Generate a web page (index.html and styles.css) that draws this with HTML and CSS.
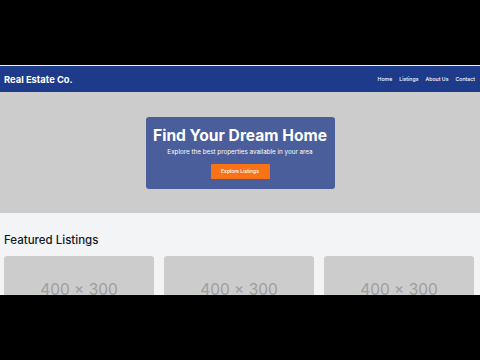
FILE: index.html
```html
<!DOCTYPE html>
<html lang="en">
<head>
    <meta charset="UTF-8">
    <title>Real Estate Co.</title>
    <link rel="stylesheet" href="styles.css">
</head>
<body>
    <div class="frame">
        <header class="topbar">
            <div class="brand">Real Estate Co.</div>
            <nav class="nav">
                <a href="#">Home</a>
                <a href="#">Listings</a>
                <a href="#">About Us</a>
                <a href="#">Contact</a>
            </nav>
        </header>

        <section class="hero">
            <div class="hero-bg">1920 x 1080</div>
            <div class="hero-box">
                <h1>Find Your Dream Home</h1>
                <p>Explore the best properties available in your area</p>
                <button class="cta">Explore Listings</button>
            </div>
        </section>

        <section class="featured">
            <h2>Featured Listings</h2>
            <div class="cards">
                <div class="card"><div class="thumb">400 x 300</div></div>
                <div class="card"><div class="thumb">400 x 300</div></div>
                <div class="card"><div class="thumb">400 x 300</div></div>
            </div>
        </section>
    </div>
</body>
</html>
```

FILE: styles.css
```css
html, body {
    margin: 0;
    padding: 0;
    background: #000;
    font-family: Inter, 'Liberation Sans', sans-serif;
}

.frame {
    margin-top: 65px;
    height: 229px;
    overflow: hidden;
    border-top: 1px solid #f0f0f0;
    background: #f3f4f6;
}

.topbar {
    height: 26px;
    background: #1e3a8a;
    display: flex;
    align-items: center;
    justify-content: space-between;
    padding: 0 5px 0 4px;
    color: #fff;
}

.brand {
    font-size: 9.4px;
    font-weight: 700;
}

.nav {
    display: flex;
    gap: 7px;
}

.nav a {
    color: #fff;
    text-decoration: none;
    font-size: 5.2px;
    font-weight: 500;
}

.hero {
    height: 121px;
    background: #cccccc;
    display: grid;
    place-items: center;
}

.hero-bg,
.hero-box {
    grid-area: 1 / 1;
}

.hero-bg {
    font-size: 14px;
    color: #bdbdbd;
    margin-top: 6px;
}

.hero-box {
    width: 189px;
    height: 72px;
    box-sizing: border-box;
    background: rgba(30, 58, 138, 0.75);
    border-radius: 3px;
    display: flex;
    flex-direction: column;
    align-items: center;
    padding-top: 9px;
    color: #fff;
    white-space: nowrap;
}

.hero-box h1 {
    margin: 0;
    font-size: 15.6px;
    font-weight: 700;
    line-height: 20px;
}

.hero-box p {
    margin: 1px 0 7px;
    font-size: 6.3px;
    line-height: 10px;
}

.cta {
    width: 59px;
    height: 15px;
    border: none;
    border-radius: 1px;
    background: #f97316;
    color: #fff;
    font-family: inherit;
    font-size: 5px;
    font-weight: 500;
    padding: 0;
}

.featured {
    padding: 0 6px 0 4px;
}

.featured h2 {
    margin: 0;
    padding: 20px 0 8px;
    font-size: 11.5px;
    font-weight: 500;
    line-height: 15px;
    color: #111827;
}

.cards {
    display: grid;
    grid-template-columns: repeat(3, 150px);
    gap: 10px;
}

.card {
    border-radius: 3px;
    overflow: hidden;
}

.thumb {
    height: 66px;
    background: #cccccc;
    color: #9e9e9e;
    font-size: 15.5px;
    display: flex;
    align-items: center;
    justify-content: center;
}
```
